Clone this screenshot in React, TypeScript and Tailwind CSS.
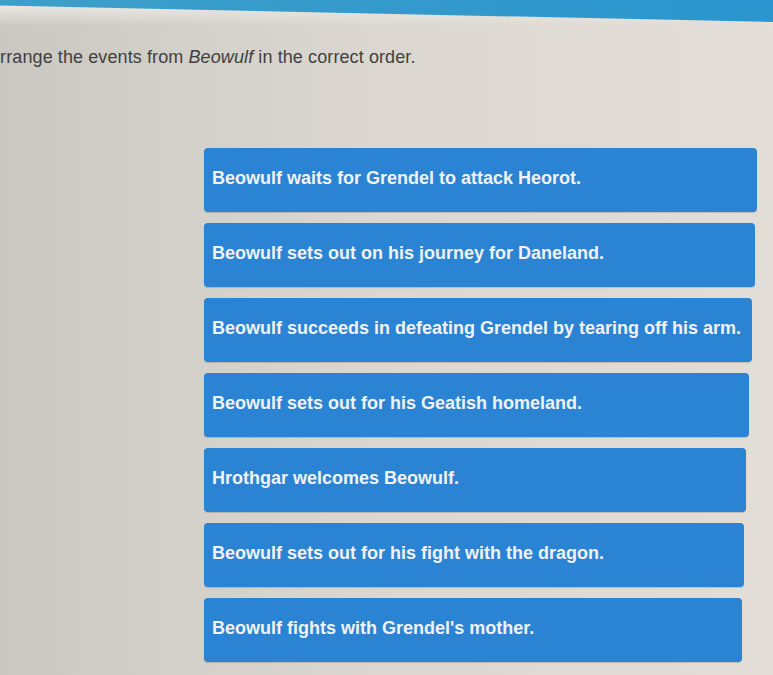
import React from 'react';

const events = [
  { text: 'Beowulf waits for Grendel to attack Heorot.', width: 'w-[553px]' },
  { text: 'Beowulf sets out on his journey for Daneland.', width: 'w-[551px]' },
  { text: 'Beowulf succeeds in defeating Grendel by tearing off his arm.', width: 'w-[548px]' },
  { text: 'Beowulf sets out for his Geatish homeland.', width: 'w-[545px]' },
  { text: 'Hrothgar welcomes Beowulf.', width: 'w-[542px]' },
  { text: 'Beowulf sets out for his fight with the dragon.', width: 'w-[540px]' },
  { text: "Beowulf fights with Grendel's mother.", width: 'w-[538px]' },
];

const App: React.FC = () => {
  return (
    <div className="w-[773px] h-[675px] overflow-hidden bg-gradient-to-r from-[#cbc8c2] via-[#dcd8d1] to-[#e2ded7] font-['Liberation_Sans',Arial,sans-serif]">
      {/* header strip */}
      <div className="h-[22px] bg-gradient-to-r from-[#3d9fc9] to-[#2a95cf] [clip-path:polygon(0_0,100%_0,100%_100%,0_25%)]" />
      <div className="h-[22px] -mt-[18px] bg-gradient-to-b from-[#eceae6] to-transparent" />

      <p className="mt-[19px] -ml-[12px] text-[18px] leading-6 text-[#404040] tracking-[0.1px] whitespace-nowrap">
        Arrange the events from <i>Beowulf</i> in the correct order.
      </p>

      <div className="mt-[79px] pl-[204px] flex flex-col gap-[11px]">
        {events.map((item, idx) => (
          <div
            key={idx}
            className={`${item.width} h-[64px] rounded-[4px] bg-[#2b84d3] px-[8px] pt-[18px] shadow-[0_1px_1px_rgba(0,0,0,0.15)]`}
          >
            <span className="text-[18px] leading-6 font-bold text-[#f0f2f5] whitespace-nowrap">{item.text}</span>
          </div>
        ))}
      </div>
    </div>
  );
};

export default App;
